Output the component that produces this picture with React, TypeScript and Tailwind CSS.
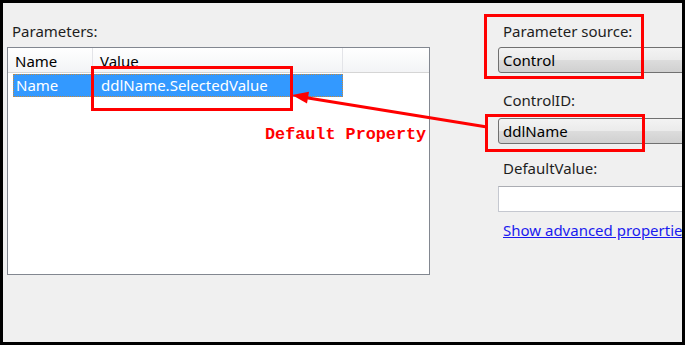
import React from "react";

const ui = "font-['Noto_Sans',_'Open_Sans',_sans-serif]";

function DropDown({ value }: { value: string }) {
  return (
    <div className="h-[26px] w-[230px] rounded-[3px] border border-[#707070] bg-[linear-gradient(#f3f3f3_0%,#ebebeb_48%,#dcdcdc_52%,#d0d0d0_100%)] pl-[4px] leading-[24px] text-black">
      {value}
    </div>
  );
}

function Label({ text }: { text: string }) {
  return <div className="h-[20px] pl-[5px] leading-[20px] text-[#1e1e1e]">{text}</div>;
}

export default function App() {
  return (
    <div className={`relative h-[345px] w-[685px] overflow-hidden border-[3px] border-black bg-[#f0f0f0] text-[15px] ${ui}`}>
      <div className="flex">
        {/* Parameters list */}
        <div className="w-[427px] shrink-0 pl-[4px] pt-[18px]">
          <div className="mb-[6px] h-[20px] pl-[5px] leading-[20px] text-[#1e1e1e]">Parameters:</div>
          <div className="h-[228px] w-[423px] border border-[#828790] bg-white">
            <div className="flex h-[25px] border-b border-[#d5d5d5] bg-[linear-gradient(#ffffff,#f3f4f6)] leading-[26px] text-black">
              <div className="w-[85px] border-r border-[#e3e4e8] pl-[7px]">Name</div>
              <div className="w-[250px] border-r border-[#e3e4e8] pl-[7px]">Value</div>
              <div className="flex-1" />
            </div>
            <div className="ml-[5px] mt-[1px] flex h-[23px] w-[330px] border border-dotted border-[#c78a3c] bg-[#3399ff] leading-[21px] text-white">
              <div className="w-[80px] pl-[2px]">Name</div>
              <div className="pl-[7px]">ddlName.SelectedValue</div>
            </div>
          </div>
        </div>

        {/* Parameter source panel */}
        <div className="ml-[68px] w-[230px] shrink-0 pt-[18px]">
          <Label text="Parameter source:" />
          <div className="mt-[6px]">
            <DropDown value="Control" />
          </div>
          <div className="mt-[17px]">
            <Label text="ControlID:" />
          </div>
          <div className="mt-[8px]">
            <DropDown value="ddlName" />
          </div>
          <div className="mt-[14px]">
            <Label text="DefaultValue:" />
          </div>
          <div className="mt-[8px] h-[26px] w-[230px] border border-[#c5c8d0] border-t-[#abadb3] bg-white" />
          <div className="mt-[8px] h-[20px] whitespace-nowrap pl-[5px] leading-[20px] text-[#1a1aee] underline">
            Show advanced properties
          </div>
        </div>
      </div>

      {/* annotations */}
      <div className="absolute left-[88px] top-[63px] h-[45px] w-[202px] border-[3px] border-[#ff0000]" />
      <div className="absolute left-[481px] top-[11px] h-[65px] w-[160px] border-[3px] border-[#ff0000]" />
      <div className="absolute left-[482px] top-[111px] h-[38px] w-[160px] border-[3px] border-[#ff0000]" />
      <div className="absolute left-[262px] top-[124px] whitespace-nowrap font-['Liberation_Mono',_'Courier_New',_monospace] text-[16.8px] font-bold leading-none text-[#ff0000]">
        Default Property
      </div>
      <svg className="pointer-events-none absolute left-0 top-0" width="679" height="339">
        <line x1="484" y1="124" x2="302" y2="94.5" stroke="#ff0000" strokeWidth="3" />
        <polygon points="289,92 304,100.5 306,88.7" fill="#ff0000" />
      </svg>
    </div>
  );
}
